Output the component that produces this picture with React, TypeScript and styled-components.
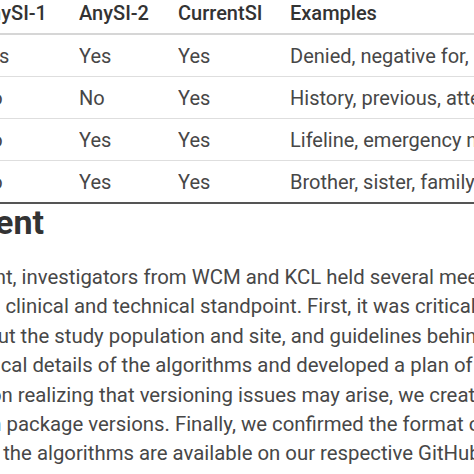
import styled, { createGlobalStyle } from 'styled-components';

const GlobalStyle = createGlobalStyle`
  html, body {
    margin: 0;
    padding: 0;
    background: #ffffff;
    overflow: hidden;
  }
  body {
    font-family: Roboto, 'Liberation Sans', sans-serif;
    color: #444444;
  }
`;

interface Row {
  category: string;
  anySi1: string;
  anySi2: string;
  currentSi: string;
  examples: string;
}

const rows: Row[] = [
  { category: 'Negation', anySi1: 'Yes', anySi2: 'Yes', currentSi: 'Yes', examples: 'Denied, negative for, no evidence of' },
  { category: 'Historical', anySi1: 'No', anySi2: 'No', currentSi: 'Yes', examples: 'History, previous, attempt in the past' },
  { category: 'Resource', anySi1: 'No', anySi2: 'Yes', currentSi: 'Yes', examples: 'Lifeline, emergency number, hotline' },
  { category: 'Family', anySi1: 'No', anySi2: 'Yes', currentSi: 'Yes', examples: 'Brother, sister, family member' },
];

// paragraph lines as they break on the page
const lines = [
  'Prior to deployment, investigators from WCM and KCL held several meetings to discuss',
  'this project from a clinical and technical standpoint. First, it was critical to learn',
  'to know more about the study population and site, and guidelines behind the notes.',
  'We covered technical details of the algorithms and developed a plan of action for',
  'the migration. Upon realizing that versioning issues may arise, we created a setup',
  'environments with package versions. Finally, we confirmed the format of the output.',
  'our data. Code for the algorithms are available on our respective GitHub pages.',
];

const App = () => {
  return (
    <>
      <GlobalStyle />
      <Page>
        <Table>
          <colgroup>
            <col style={{ width: '142px' }} />
            <col style={{ width: '102px' }} />
            <col style={{ width: '99px' }} />
            <col style={{ width: '112px' }} />
            <col style={{ width: '420px' }} />
          </colgroup>
          <thead>
            <tr>
              <HeadCell>Category</HeadCell>
              <HeadCell>AnySI-1</HeadCell>
              <HeadCell>AnySI-2</HeadCell>
              <HeadCell>CurrentSI</HeadCell>
              <HeadCell>Examples</HeadCell>
            </tr>
          </thead>
          <tbody>
            {rows.map((row, i) => (
              <BodyRow key={row.category} $last={i === rows.length - 1}>
                <Cell>{row.category}</Cell>
                <Cell>{row.anySi1}</Cell>
                <Cell>{row.anySi2}</Cell>
                <Cell>{row.currentSi}</Cell>
                <Cell>{row.examples}</Cell>
              </BodyRow>
            ))}
          </tbody>
        </Table>
        <Heading>4 Deployment</Heading>
        <Paragraph>
          {lines.map((line) => (
            <Line key={line}>{line}</Line>
          ))}
        </Paragraph>
      </Page>
    </>
  );
};

// container
const Page = styled.div`
  width: 900px;
  margin: -8px 0 0 -165px;
`;

// table
const Table = styled.table`
  border-collapse: collapse;
  table-layout: fixed;
  width: 875px;
  font-size: 20px;
  line-height: 28px;
`;

const HeadCell = styled.th`
  text-align: left;
  font-weight: 500;
  color: #333333;
  padding: 6.5px 0;
  border-bottom: 2px solid #d6d6d6;
  white-space: nowrap;
`;

const BodyRow = styled.tr<{ $last: boolean }>`
  border-bottom: ${(p) => (p.$last ? '2px solid #555555' : '1px solid #dedede')};
`;

const Cell = styled.td`
  padding: 6.5px 0;
  color: #474747;
  white-space: nowrap;
  overflow: hidden;
`;

// text
const Heading = styled.h2`
  margin: 0 0 0 -2px;
  font-size: 34px;
  font-weight: 700;
  line-height: 37px;
  color: #333333;
`;

const Paragraph = styled.p`
  margin: 22px 0 0;
  font-size: 20.35px;
  line-height: 29.4px;
  color: #474747;
`;

const Line = styled.span`
  display: block;
  white-space: nowrap;
`;

export default App;
